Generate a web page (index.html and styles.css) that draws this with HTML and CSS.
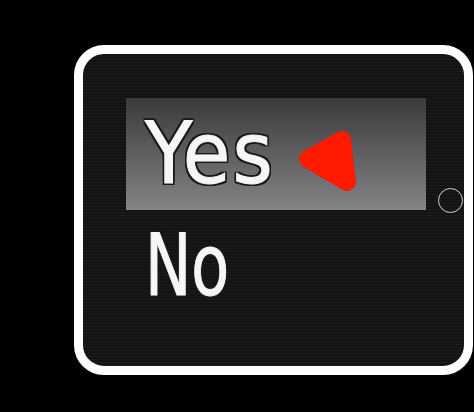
FILE: index.html
```html
<!DOCTYPE html>
<html>
<head>
<meta charset="utf-8">
<link rel="stylesheet" href="styles.css">
</head>
<body>
<div class="panel">
  <div class="row">
    <ul class="menu">
      <li class="item selected"><span class="label">Yes</span>
        <svg class="arrow" width="60" height="64" viewBox="0 0 60 64"><polygon points="12,31 46,12 51,54" fill="#ff1a00" stroke="#ff1a00" stroke-width="18" stroke-linejoin="round"/></svg>
      </li>
      <li class="item"><span class="label narrow">No</span></li>
    </ul>
    <div class="knob"></div>
  </div>
</div>
</body>
</html>
```
FILE: styles.css
```css
html, body {
  margin: 0;
  padding: 0;
  background: #000;
}
body {
  width: 474px;
  height: 412px;
  overflow: hidden;
}
.panel {
  box-sizing: border-box;
  margin: 45px 0 0 74px;
  width: 399px;
  height: 330px;
  border: 9px solid #fff;
  border-radius: 30px;
  background: repeating-linear-gradient(to bottom, #131215 0 2px, #1b1a1d 2px 3px);
  padding: 44px 0 0 43px;
}
.row {
  display: flex;
  align-items: flex-start;
}
.menu {
  list-style: none;
  margin: 0;
  padding: 0;
  width: 300px;
}
.item {
  display: flex;
  align-items: flex-start;
  height: 112px;
  box-sizing: border-box;
  padding-left: 19px;
}
.selected {
  background: linear-gradient(to bottom, #3a3a3d, #848486);
}
.label {
  display: inline-block;
  font-family: "DejaVu Sans Condensed", "DejaVu Sans", sans-serif;
  font-size: 86px;
  line-height: 1;
  margin-top: 12px;
  color: #f6f6f6;
  letter-spacing: 2px;
  -webkit-text-stroke: 1px #f6f6f6;
  text-shadow: 2px 0 0 #1a1a1a, -2px 0 0 #1a1a1a, 0 2px 0 #1a1a1a, 0 -2px 0 #1a1a1a,
    2px 2px 0 #1a1a1a, -2px -2px 0 #1a1a1a, 2px -2px 0 #1a1a1a, -2px 2px 0 #1a1a1a;
}
.narrow {
  letter-spacing: 0;
  transform: scaleX(0.8);
  transform-origin: left top;
}
.arrow {
  margin: 30px 0 0 21px;
}
.knob {
  box-sizing: border-box;
  width: 25px;
  height: 25px;
  border: 1.5px solid #d0d0d0;
  border-radius: 50%;
  margin: 90px 0 0 12px;
}
```
